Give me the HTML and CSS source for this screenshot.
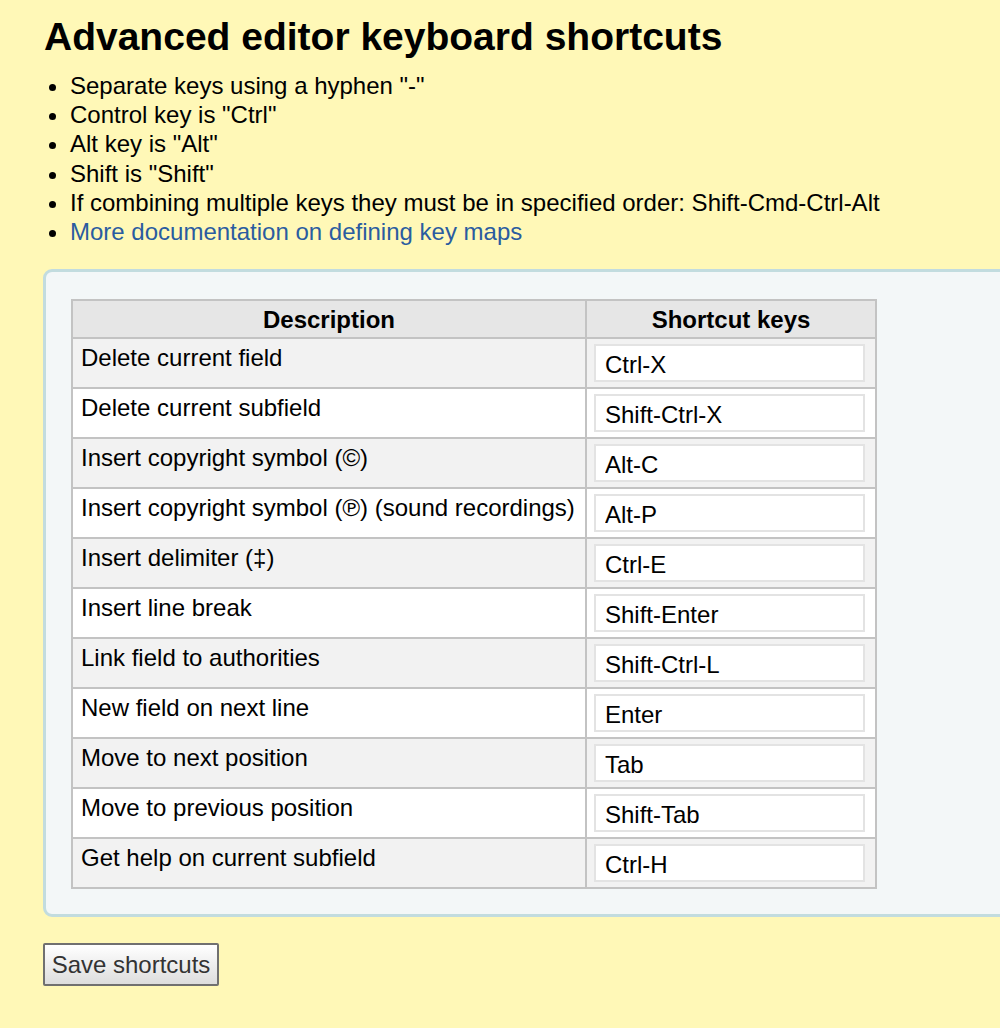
FILE: index.html
```html
<!DOCTYPE html>
<html lang="en">
<head>
<meta charset="utf-8">
<title>Advanced editor keyboard shortcuts</title>
<link rel="stylesheet" href="styles.css">
</head>
<body>
<div class="page">
  <h1 class="title">Advanced editor keyboard shortcuts</h1>
  <ul class="hints">
    <li>Separate keys using a hyphen "-"</li>
    <li>Control key is "Ctrl"</li>
    <li>Alt key is "Alt"</li>
    <li>Shift is "Shift"</li>
    <li>If combining multiple keys they must be in specified order: Shift-Cmd-Ctrl-Alt</li>
    <li><a class="doc-link" href="#">More documentation on defining key maps</a></li>
  </ul>
  <div class="panel">
    <table class="shortcuts">
      <thead>
        <tr><th class="col-desc">Description</th><th class="col-keys">Shortcut keys</th></tr>
      </thead>
      <tbody>
        <tr><td>Delete current field</td><td class="key-cell"><input class="key-input" type="text" value="Ctrl-X"></td></tr>
        <tr><td>Delete current subfield</td><td class="key-cell"><input class="key-input" type="text" value="Shift-Ctrl-X"></td></tr>
        <tr><td>Insert copyright symbol (©)</td><td class="key-cell"><input class="key-input" type="text" value="Alt-C"></td></tr>
        <tr><td>Insert copyright symbol (℗) (sound recordings)</td><td class="key-cell"><input class="key-input" type="text" value="Alt-P"></td></tr>
        <tr><td>Insert delimiter (‡)</td><td class="key-cell"><input class="key-input" type="text" value="Ctrl-E"></td></tr>
        <tr><td>Insert line break</td><td class="key-cell"><input class="key-input" type="text" value="Shift-Enter"></td></tr>
        <tr><td>Link field to authorities</td><td class="key-cell"><input class="key-input" type="text" value="Shift-Ctrl-L"></td></tr>
        <tr><td>New field on next line</td><td class="key-cell"><input class="key-input" type="text" value="Enter"></td></tr>
        <tr><td>Move to next position</td><td class="key-cell"><input class="key-input" type="text" value="Tab"></td></tr>
        <tr><td>Move to previous position</td><td class="key-cell"><input class="key-input" type="text" value="Shift-Tab"></td></tr>
        <tr><td>Get help on current subfield</td><td class="key-cell"><input class="key-input" type="text" value="Ctrl-H"></td></tr>
      </tbody>
    </table>
  </div>
  <button class="save-btn" type="button">Save shortcuts</button>
</div>
</body>
</html>
```
FILE: styles.css
```css
html, body {
  margin: 0;
  padding: 0;
  background: #fff8b7;
}
body {
  font-family: "Liberation Sans", Arial, Helvetica, sans-serif;
  color: #000;
  overflow: hidden;
}
.page {
  padding: 14px 0 40px 43px;
}
.title {
  margin: 0 0 0 1px;
  font-size: 39px;
  line-height: 46px;
  font-weight: bold;
}
.hints {
  margin: 11px 0 0 0;
  padding: 0 0 0 27px;
  font-size: 24px;
  line-height: 29.2px;
}
.hints li {
  padding-left: 0;
}
.doc-link {
  color: #2a5ca0;
  text-decoration: none;
}
.panel {
  margin-top: 23px;
  margin-right: -20px;
  border: 3px solid #c2dcdf;
  border-radius: 9px;
  background: #f3f7f8;
  padding: 27px 25px 25px 25px;
}
.shortcuts {
  border-collapse: collapse;
  border: 2px solid #c3c3c3;
  font-size: 24px;
}
.shortcuts th,
.shortcuts td {
  border: 2px solid #c3c3c3;
}
.shortcuts th {
  background: #e6e6e6;
  font-weight: bold;
  height: 36px;
  padding: 0 8px;
  text-align: center;
  line-height: 27px;
}
.col-desc {
  width: 496px;
}
.col-keys {
  width: 272px;
}
.shortcuts td {
  vertical-align: top;
  padding: 5px 8px 0 8px;
  height: 43px;
  line-height: 28px;
}
.shortcuts tbody tr:nth-child(odd) td {
  background: #f2f2f2;
}
.shortcuts tbody tr:nth-child(even) td {
  background: #ffffff;
}
.shortcuts td.key-cell {
  padding: 5px 9px 5px 7px;
  height: 38px;
}
.key-input {
  display: block;
  box-sizing: border-box;
  width: 271px;
  height: 38px;
  margin: 0;
  padding: 3px 9px 0 9px;
  border: 2px solid #e3e3e3;
  background: #fff;
  font-family: "Liberation Sans", Arial, Helvetica, sans-serif;
  font-size: 24px;
  color: #000;
  outline: none;
}
.save-btn {
  display: block;
  margin-top: 26px;
  box-sizing: border-box;
  width: 176px;
  height: 43px;
  padding: 0 6px;
  border: 2px solid #707070;
  border-radius: 2px;
  background: linear-gradient(#ffffff, #dddddd);
  font-family: "Liberation Sans", Arial, Helvetica, sans-serif;
  font-size: 24px;
  color: #333;
}
```
